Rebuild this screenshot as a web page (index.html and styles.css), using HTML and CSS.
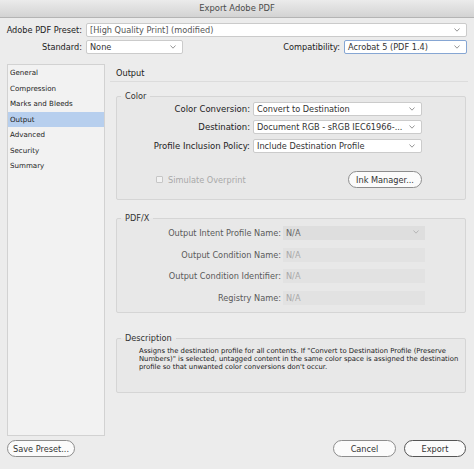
FILE: index.html
```html
<!DOCTYPE html>
<html>
<head>
<meta charset="utf-8">
<link rel="stylesheet" href="styles.css">
</head>
<body>
<div class="window">
  <div class="titlebar">Export Adobe PDF</div>
  <div class="top">
    <div class="row">
      <span class="lbl lbl-top">Adobe PDF Preset:</span>
      <div class="select preset">[High Quality Print] (modified)<svg class="chev" width="6" height="4" viewBox="0 0 6 4"><path d="M0.5 0.5 L3 3.2 L5.5 0.5"/></svg></div>
    </div>
    <div class="row row2">
      <span class="lbl lbl-top">Standard:</span>
      <div class="select std">None<svg class="chev" width="6" height="4" viewBox="0 0 6 4"><path d="M0.5 0.5 L3 3.2 L5.5 0.5"/></svg></div>
      <span class="spacer"></span>
      <span class="lbl">Compatibility:</span>
      <div class="select compat">Acrobat 5 (PDF 1.4)<svg class="chev" width="6" height="4" viewBox="0 0 6 4"><path d="M0.5 0.5 L3 3.2 L5.5 0.5"/></svg></div>
    </div>
  </div>
  <div class="main">
    <ul class="sidebar">
      <li>General</li>
      <li>Compression</li>
      <li>Marks and Bleeds</li>
      <li class="active">Output</li>
      <li>Advanced</li>
      <li>Security</li>
      <li>Summary</li>
    </ul>
    <div class="panel">
      <div class="panel-head">Output</div>
      <fieldset class="group color">
        <legend>Color</legend>
        <div class="frow">
          <span class="flbl">Color Conversion:</span>
          <div class="select wide">Convert to Destination<svg class="chev" width="6" height="4" viewBox="0 0 6 4"><path d="M0.5 0.5 L3 3.2 L5.5 0.5"/></svg></div>
        </div>
        <div class="frow">
          <span class="flbl">Destination:</span>
          <div class="select wide">Document RGB - sRGB IEC61966-...<svg class="chev" width="6" height="4" viewBox="0 0 6 4"><path d="M0.5 0.5 L3 3.2 L5.5 0.5"/></svg></div>
        </div>
        <div class="frow">
          <span class="flbl">Profile Inclusion Policy:</span>
          <div class="select wide">Include Destination Profile<svg class="chev" width="6" height="4" viewBox="0 0 6 4"><path d="M0.5 0.5 L3 3.2 L5.5 0.5"/></svg></div>
        </div>
        <div class="optrow">
          <span class="check"></span>
          <span class="disabled-text">Simulate Overprint</span>
          <span class="spacer"></span>
          <span class="btn ink">Ink Manager...</span>
        </div>
      </fieldset>
      <fieldset class="group pdfx">
        <legend>PDF/X</legend>
        <div class="xrow">
          <span class="xlbl">Output Intent Profile Name:</span>
          <div class="field sel">N/A<svg class="chev light" width="6" height="4" viewBox="0 0 6 4"><path d="M0.5 0.5 L3 3.2 L5.5 0.5"/></svg></div>
        </div>
        <div class="xrow">
          <span class="xlbl">Output Condition Name:</span>
          <div class="field">N/A</div>
        </div>
        <div class="xrow">
          <span class="xlbl">Output Condition Identifier:</span>
          <div class="field">N/A</div>
        </div>
        <div class="xrow">
          <span class="xlbl">Registry Name:</span>
          <div class="field">N/A</div>
        </div>
      </fieldset>
      <fieldset class="group desc">
        <legend>Description</legend>
        <p class="desc-text">Assigns the destination profile for all contents. If "Convert to Destination Profile (Preserve<br>Numbers)" is selected, untagged content in the same color space is assigned the destination<br>profile so that unwanted color conversions don't occur.</p>
      </fieldset>
    </div>
  </div>
  <div class="bottom">
    <span class="btn save">Save Preset...</span>
    <span class="spacer"></span>
    <span class="btn cancel">Cancel</span>
    <span class="btn export">Export</span>
  </div>
</div>
</body>
</html>
```

FILE: styles.css
```css
* { box-sizing: border-box; }
html, body { margin: 0; padding: 0; }
body {
  width: 474px;
  height: 469px;
  background: #ececec;
  font-family: "DejaVu Sans", "Noto Sans", sans-serif;
  font-size: 8.2px;
  color: #222;
  overflow: hidden;
}
.window { width: 474px; height: 469px; display: flex; flex-direction: column; }
.titlebar {
  height: 18px;
  background: linear-gradient(#ebebeb, #d3d3d3);
  border-bottom: 1px solid #b4b4b4;
  text-align: center;
  line-height: 16px;
  font-size: 8.4px;
  color: #4a4a4a;
}
.top { padding: 5px 7px 0 0; display: flex; flex-direction: column; gap: 2px; }
.row { display: flex; align-items: center; height: 14px; }
.row2 { height: 15px; }
.lbl { text-align: right; margin-right: 4px; white-space: nowrap; }
.lbl-top { width: 82px; flex: none; }
.spacer { flex: 1; }
.select {
  position: relative;
  height: 14px;
  line-height: 12px;
  background: #fff;
  border: 1px solid #cbcbcb;
  border-radius: 2px;
  padding: 0 14px 0 3px;
  white-space: nowrap;
  overflow: hidden;
  color: #333;
}
.chev { position: absolute; right: 6px; top: 4px; }
.chev path { fill: none; stroke: #8a8a8a; stroke-width: 0.9; }
.chev.light path { stroke: #b0b0b0; }
.preset { flex: 1; color: #555; }
.std { width: 97px; }
.compat { width: 123px; border-color: #86a6d3; }
.main { display: flex; margin-top: 10px; height: 372px; }
.sidebar {
  flex: none;
  list-style: none;
  margin: 0 0 0 7px;
  padding: 0;
  width: 98px;
  height: 372px;
  background: #f2f2f2;
  border: 1px solid #d2d2d2;
  font-size: 7.1px;
}
.sidebar li {
  height: 15.5px;
  line-height: 15.5px;
  padding-left: 2px;
  color: #222;
}
.sidebar li.active { background: #b7cfee; }
.panel { flex: 1; min-width: 0; margin-left: 5px; margin-right: 6px; }
.panel-head {
  height: 18px;
  line-height: 18px;
  padding-left: 6px;
  border-bottom: 1px solid #dcdcdc;
}
.group {
  min-width: 0;
  margin: 0 2px 0 6px;
  padding: 0;
  border: 1px solid #d5d5d5;
  border-radius: 2px;
  background: #e8e8e8;
}
.group legend {
  margin-left: 4px;
  padding: 0 4px;
  line-height: 10px;
  color: #333;
}
.color { margin-top: 9px; height: 109px; }
.frow { display: flex; align-items: center; height: 14px; margin-top: 4.3px; }
.color .frow:first-of-type { margin-top: 1px; }
.flbl { width: 133px; text-align: right; margin-right: 3px; white-space: nowrap; font-size: 8.5px; }
.wide { width: 169px; }
.optrow { display: flex; align-items: center; height: 17px; margin-top: 18.5px; padding-left: 39px; padding-right: 43px; }
.check {
  width: 7px; height: 7px;
  border: 1px solid #c6c6c6;
  border-radius: 1px;
  background: #f2f2f2;
  margin-right: 5px;
}
.disabled-text { color: #a8a8a8; }
.btn {
  display: inline-flex;
  align-items: center;
  justify-content: center;
  height: 17px;
  border: 1px solid #8d8d8d;
  border-radius: 9px;
  background: #fbfbfb;
  color: #333;
  white-space: nowrap;
}
.ink { width: 74px; }
.pdfx { margin-top: 13px; height: 100px; }
.xrow { display: flex; align-items: center; height: 14px; margin-top: 7.5px; }
.pdfx .xrow:first-of-type { margin-top: 3px; }
.xlbl { width: 164px; text-align: right; margin-right: 2px; color: #5a5a5a; white-space: nowrap; }
.field {
  position: relative;
  width: 142px;
  height: 14px;
  line-height: 14px;
  background: #e2e2e2;
  padding-left: 3px;
  color: #a8a8a8;
}
.field.sel { color: #666; background: #dedede; }
.desc { margin-top: 20px; height: 60px; }
.desc-text {
  margin: 4px 0 0 22px;
  font-size: 6.85px;
  line-height: 8.2px;
  white-space: nowrap;
  color: #222;
}
.bottom { display: flex; align-items: center; padding: 4px 8px 0 7px; gap: 8px; }
.save { width: 68px; }
.cancel { width: 63px; }
.export { width: 62px; border: 1.5px solid #555; }
```
